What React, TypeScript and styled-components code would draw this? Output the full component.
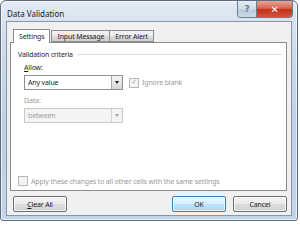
import React from "react";
import styled, { createGlobalStyle } from "styled-components";

const Global = createGlobalStyle`
  html, body {
    margin: 0;
    padding: 0;
    background: #ffffff;
  }
  body {
    font-family: "Noto Sans", "Open Sans", "DejaVu Sans", sans-serif;
    font-size: 7px;
    letter-spacing: -0.15px;
    color: #1e1e1e;
  }
`;

const Frame = styled.div`
  width: 298px;
  height: 221px;
  box-sizing: border-box;
  border: 1px solid #5d6c7f;
  border-radius: 6px 6px 3px 3px;
  background: linear-gradient(180deg, #e3ebf4 0%, #cddbea 20%, #bcd0e6 60%, #c4d5e8 100%);
  box-shadow: inset 0 0 0 1px rgba(255, 255, 255, 0.6);
  display: flex;
  flex-direction: column;
  padding: 0 5px 4px 5px;
`;

const TitleBar = styled.div`
  height: 20px;
  display: flex;
  align-items: flex-start;
  justify-content: space-between;
`;

const Title = styled.div`
  margin-top: 7px;
  margin-left: 1px;
  font-size: 8px;
  letter-spacing: 0;
  color: #1a1a1a;
`;

const Controls = styled.div`
  display: flex;
  margin-right: -1px;
  border: 1px solid #6b7c90;
  border-top: none;
  border-radius: 0 0 4px 4px;
  overflow: hidden;
`;

const CtrlButton = styled.div<{ $close?: boolean }>`
  width: ${(p) => (p.$close ? "35px" : "18px")};
  height: 16px;
  display: flex;
  align-items: center;
  justify-content: center;
  color: ${(p) => (p.$close ? "#ffffff" : "#6a7a8c")};
  font-weight: bold;
  font-size: ${(p) => (p.$close ? "10px" : "9px")};
  background: ${(p) =>
    p.$close
      ? "linear-gradient(180deg, #e8a597 0%, #d9634f 45%, #c4301c 55%, #d4533c 100%)"
      : "linear-gradient(180deg, #e4ecf5 0%, #cfdbe8 50%, #bccbdc 55%, #cdd9e6 100%)"};
  border-left: ${(p) => (p.$close ? "1px solid #6b7c90" : "none")};
  font-family: "DejaVu Sans", sans-serif;
`;

const Client = styled.div`
  flex: 1;
  background: #f0f0f0;
  border: 1px solid #8797ab;
  display: flex;
  flex-direction: column;
  padding: 6px 4px 0 3px;
`;

const TabRow = styled.div`
  display: flex;
  align-items: flex-end;
  padding-left: 3px;
  height: 14px;
`;

const Tab = styled.div<{ $active?: boolean }>`
  height: ${(p) => (p.$active ? "14px" : "12px")};
  box-sizing: border-box;
  padding: 0 5px;
  margin-right: ${(p) => (p.$active ? "1px" : "0")};
  margin-bottom: ${(p) => (p.$active ? "-1px" : "0")};
  border: 1px solid #8c8c8c;
  border-bottom: ${(p) => (p.$active ? "none" : "1px solid #8c8c8c")};
  border-left: ${(p) => (p.$active ? "1px solid #8c8c8c" : "none")};
  background: ${(p) =>
    p.$active ? "#ffffff" : "linear-gradient(180deg, #f2f2f2 0%, #ebebeb 50%, #dddddd 51%, #cfcfcf 100%)"};
  display: flex;
  align-items: center;
  position: relative;
  z-index: ${(p) => (p.$active ? 1 : 0)};
  color: #1e1e1e;
  &:nth-child(2) {
    border-left: 1px solid #8c8c8c;
  }
`;

const Panel = styled.div`
  height: 149px;
  box-sizing: border-box;
  background: #ffffff;
  border: 1px solid #8c8c8c;
  padding: 6px 4px 0 7px;
  display: flex;
  flex-direction: column;
`;

const Group = styled.div`
  display: flex;
  align-items: center;
  gap: 4px;
  height: 10px;
  &::after {
    content: "";
    flex: 1;
    border-top: 1px solid #dcdcdc;
  }
`;

const Fields = styled.div`
  padding-left: 6px;
  display: flex;
  flex-direction: column;
`;

const Label = styled.div<{ $disabled?: boolean }>`
  margin-top: ${(p) => (p.$disabled ? "6px" : "4px")};
  height: 9px;
  color: ${(p) => (p.$disabled ? "#9a9a9a" : "#1e1e1e")};
  u {
    text-decoration: underline;
  }
`;

const Row = styled.div`
  display: flex;
  align-items: center;
  gap: 6px;
  margin-top: 3px;
`;

const Select = styled.div<{ $disabled?: boolean }>`
  width: 99px;
  height: 15px;
  box-sizing: border-box;
  border: 1px solid ${(p) => (p.$disabled ? "#c8c8c8" : "#8e8f8f")};
  background: ${(p) => (p.$disabled ? "#f4f4f4" : "#ffffff")};
  display: flex;
  align-items: stretch;
  color: ${(p) => (p.$disabled ? "#a0a0a0" : "#1e1e1e")};
`;

const SelectText = styled.div`
  flex: 1;
  display: flex;
  align-items: center;
  padding-left: 3px;
`;

const Arrow = styled.div<{ $disabled?: boolean }>`
  width: 10px;
  border-left: 1px solid ${(p) => (p.$disabled ? "#d4d4d4" : "#a8a8a8")};
  background: ${(p) =>
    p.$disabled ? "#f4f4f4" : "linear-gradient(180deg, #f4f4f4 0%, #e6e6e6 50%, #d6d6d6 100%)"};
  display: flex;
  align-items: center;
  justify-content: center;
  &::after {
    content: "";
    border-left: 2.5px solid transparent;
    border-right: 2.5px solid transparent;
    border-top: 3px solid ${(p) => (p.$disabled ? "#a8a8a8" : "#1e1e1e")};
  }
`;

const Check = styled.div`
  width: 8px;
  height: 8px;
  border: 1px solid #b8b8b8;
  background: #f4f4f4;
  display: flex;
  align-items: center;
  justify-content: center;
  color: #a8a8a8;
  font-size: 7px;
  line-height: 1;
  font-family: "DejaVu Sans", sans-serif;
`;

const CheckLabel = styled.div`
  display: flex;
  align-items: center;
  gap: 3px;
  color: #9a9a9a;
`;

const Spacer = styled.div`
  flex: 1;
`;

const ApplyRow = styled(CheckLabel)`
  margin-bottom: 4px;
`;

const ButtonBar = styled.div`
  display: flex;
  align-items: center;
  padding: 5px 0 0 3px;
`;

const Button = styled.div<{ $default?: boolean }>`
  width: 54px;
  height: 16px;
  box-sizing: border-box;
  border: 1px solid ${(p) => (p.$default ? "#3c7fb1" : "#707070")};
  border-radius: 2px;
  background: ${(p) =>
    p.$default
      ? "linear-gradient(180deg, #eaf6fd 0%, #d9f0fc 50%, #bee6fd 51%, #a7d9f5 100%)"
      : "linear-gradient(180deg, #f2f2f2 0%, #ebebeb 50%, #dddddd 51%, #cfcfcf 100%)"};
  box-shadow: inset 0 0 0 1px rgba(255, 255, 255, 0.7);
  display: flex;
  align-items: center;
  justify-content: center;
  color: #1e1e1e;
  & + & {
    margin-left: 7px;
  }
`;

export default function App() {
  return (
    <>
      <Global />
      <Frame>
        <TitleBar>
          <Title>Data Validation</Title>
          <Controls>
            <CtrlButton>?</CtrlButton>
            <CtrlButton $close>✕</CtrlButton>
          </Controls>
        </TitleBar>
        <Client>
          <TabRow>
            <Tab $active>Settings</Tab>
            <Tab>Input Message</Tab>
            <Tab>Error Alert</Tab>
          </TabRow>
          <Panel>
            <Group>Validation criteria</Group>
            <Fields>
              <Label>
                <u>A</u>llow:
              </Label>
              <Row>
                <Select>
                  <SelectText>Any value</SelectText>
                  <Arrow />
                </Select>
                <CheckLabel>
                  <Check>✓</Check>
                  Ignore blank
                </CheckLabel>
              </Row>
              <Label $disabled>Data:</Label>
              <Row>
                <Select $disabled>
                  <SelectText>between</SelectText>
                  <Arrow $disabled />
                </Select>
              </Row>
            </Fields>
            <Spacer />
            <ApplyRow>
              <Check />
              Apply these changes to all other cells with the same settings
            </ApplyRow>
          </Panel>
          <ButtonBar>
            <Button>
              <u>C</u>lear All
            </Button>
            <Spacer />
            <Button $default>OK</Button>
            <Button>Cancel</Button>
          </ButtonBar>
        </Client>
      </Frame>
    </>
  );
}
